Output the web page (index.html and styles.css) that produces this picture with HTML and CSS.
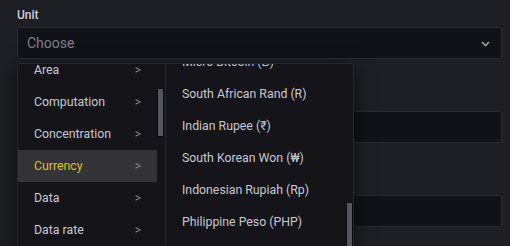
FILE: index.html
```html
<!DOCTYPE html>
<html lang="en">
<head>
    <meta charset="UTF-8">
    <meta name="viewport" content="width=device-width, initial-scale=1.0">
    <title>Unit</title>
    <link rel="stylesheet" href="styles.css">
</head>
<body>

<div class="form">
    <div class="field">
        <label class="field-label">Unit</label>
        <div class="select">
            <span class="placeholder">Choose</span>
            <svg class="chevron" width="9" height="6" viewBox="0 0 9 6">
                <polyline points="1,1 4.5,4.5 8,1" fill="none" stroke="#9d9ea6" stroke-width="1.6"/>
            </svg>
        </div>

        <div class="cascader">
            <div class="col col-left">
                <ul class="options">
                    <li class="option">Area <span class="arrow">&gt;</span></li>
                    <li class="option">Computation <span class="arrow">&gt;</span></li>
                    <li class="option">Concentration <span class="arrow">&gt;</span></li>
                    <li class="option active">Currency <span class="arrow">&gt;</span></li>
                    <li class="option">Data <span class="arrow">&gt;</span></li>
                    <li class="option">Data rate <span class="arrow">&gt;</span></li>
                </ul>
                <div class="thumb thumb-left"></div>
            </div>
            <div class="col col-right">
                <ul class="options">
                    <li class="option">Micro Bitcoin (Ƀ)</li>
                    <li class="option">South African Rand (R)</li>
                    <li class="option">Indian Rupee (₹)</li>
                    <li class="option">South Korean Won (₩)</li>
                    <li class="option">Indonesian Rupiah (Rp)</li>
                    <li class="option">Philippine Peso (PHP)</li>
                </ul>
                <div class="thumb thumb-right"></div>
            </div>
        </div>
    </div>

    <div class="field">
        <label class="field-label">Decimals</label>
        <div class="select"></div>
    </div>

    <div class="field">
        <label class="field-label">Min</label>
        <div class="select"></div>
    </div>
</div>

</body>
</html>
```

FILE: styles.css
```css
body {
    margin: 0;
    height: 246px;
    overflow: hidden;
    background-color: #1e1f24;
    font-family: Roboto, "Liberation Sans", sans-serif;
}
.form {
    padding: 7px 8px 0 17px;
}
.field {
    position: relative;
    margin-bottom: 32px;
}
.field-label {
    display: block;
    font-size: 12px;
    font-weight: 500;
    line-height: 16px;
    margin-bottom: 4px;
    color: #c9d1dc;
}
.select {
    height: 32px;
    box-sizing: border-box;
    border: 1px solid #2c2d33;
    border-radius: 2px;
    background-color: #111217;
    display: flex;
    align-items: center;
    justify-content: space-between;
    padding: 0 11px 0 9px;
}
.placeholder {
    font-size: 14px;
    color: #7e7f86;
}
.chevron {
    margin-top: 1px;
}
.cascader {
    position: absolute;
    top: 56px;
    left: 0;
    z-index: 10;
    width: 337px;
    height: 200px;
    box-sizing: border-box;
    display: flex;
    background-color: #141419;
    border: 1px solid #26272c;
    border-radius: 2px;
    box-shadow: 0 4px 20px rgba(0, 0, 0, 0.6);
    overflow: hidden;
}
.col {
    position: relative;
    overflow: hidden;
}
.col-left {
    width: 147px;
    border-right: 1px solid #26272c;
}
.col-right {
    flex: 1;
}
.options {
    list-style: none;
    margin: 0;
    padding: 0;
}
.col-left .options {
    margin: -10px 8px 0 0;
}
.col-right .options {
    margin-top: -18px;
}
.option {
    height: 32px;
    display: flex;
    align-items: center;
    justify-content: space-between;
    padding: 0 16px;
    font-size: 12.3px;
    color: #c8c9d0;
}
.option.active {
    background-color: #343437;
    color: #d8c21a;
}
.arrow {
    font-size: 12px;
    color: #85868d;
}
.thumb {
    position: absolute;
    right: 1px;
    width: 5px;
    background-color: #55555f;
    border: 1px solid #0a0a0d;
}
.thumb-left {
    top: 24px;
    height: 47px;
}
.thumb-right {
    right: 0;
    top: 138px;
    height: 80px;
}
```
